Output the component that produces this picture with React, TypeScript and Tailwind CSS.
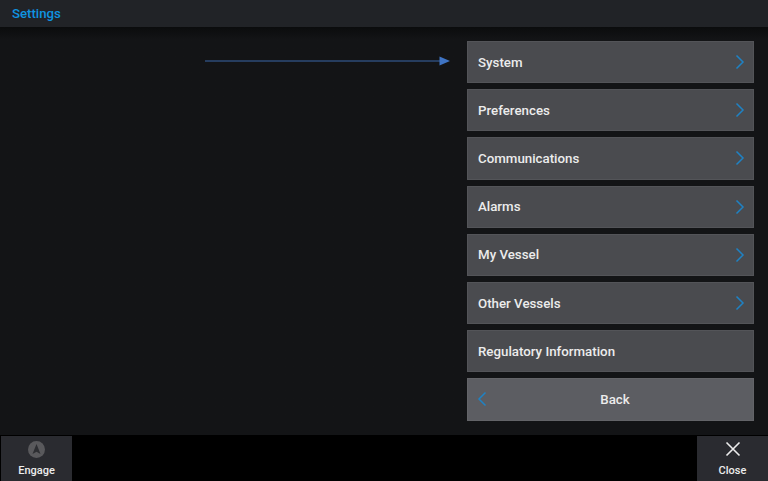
const items = ["System", "Preferences", "Communications", "Alarms", "My Vessel", "Other Vessels"];

const Chevron = ({ left = false }: { left?: boolean }) => (
    <svg width="10" height="16" viewBox="0 0 10 16" fill="none" className="shrink-0">
        <path
            d={left ? "M8.5 1.5 L2 8 L8.5 14.5" : "M1.5 1.5 L8 8 L1.5 14.5"}
            stroke="#1f82c4"
            strokeWidth="1.5"
        />
    </svg>
);

const App = () => {
    return (
        <div className="flex flex-col w-[768px] h-[481px] overflow-hidden bg-black font-['Roboto',sans-serif] text-[#ececec]">
            {/* Title bar */}
            <div className="flex items-center h-[27px] pl-3 bg-[#212327] text-[#0f93e0] text-[13.2px] font-medium shrink-0">
                Settings
            </div>

            {/* Menu */}
            <div className="relative flex justify-end h-[408px] pt-[14px] pr-[14px] bg-gradient-to-b from-[#0b0c0d] from-0% via-[#131416] via-[3%] to-[#131416]">
                <svg width="246" height="10" viewBox="0 0 246 10" className="absolute left-[205px] top-[29px]">
                    <path d="M0 5 H236" stroke="#3a66a8" strokeWidth="1" />
                    <path d="M234.5 0.5 L245 5 L234.5 9.5 Z" fill="#3f74c4" />
                </svg>
                <div className="flex flex-col gap-[6px] w-[287px]">
                    {items.map((item) => (
                        <div
                            key={item}
                            className="flex items-center justify-between h-[42.2px] pl-[10px] pr-[8px] bg-[#4a4b4f] border border-[#535458] text-[13.3px] font-medium"
                        >
                            <span className="pt-px">{item}</span>
                            <Chevron />
                        </div>
                    ))}
                    <div className="flex items-center h-[42.2px] pl-[10px] bg-[#4a4b4f] border border-[#535458] text-[13.3px] font-medium">
                        <span className="pt-px">Regulatory Information</span>
                    </div>
                    <div className="relative flex items-center justify-center h-[42.2px] pl-[9px] bg-[#5c5d62] border border-[#636468] text-[13.3px] font-medium">
                        <div className="absolute left-[9px] top-[12px]">
                            <Chevron left />
                        </div>
                        <span className="pt-px">Back</span>
                    </div>
                </div>
            </div>

            {/* Bottom bar */}
            <div className="flex justify-between flex-1 pt-px pl-px bg-black">
                <div className="flex flex-col items-center w-[71px] h-[45px] pt-[5px] bg-[#2a2b30] text-[11px] font-medium">
                    <svg width="17" height="17" viewBox="0 0 17 17" className="shrink-0">
                        <circle cx="8.5" cy="8.5" r="8.5" fill="#59595c" />
                        <path d="M8.5 3 L12.5 13 L8.5 10.8 L4.5 13 Z" fill="#2d2e32" />
                    </svg>
                    <span className="mt-[6px] leading-[13px]">Engage</span>
                </div>
                <div className="flex flex-col items-center w-[71px] h-[45px] pt-[5px] bg-[#2a2b30] text-[11px] font-medium">
                    <svg width="16" height="16" viewBox="0 0 16 16" fill="none" className="shrink-0">
                        <path d="M1.5 1.5 L14.5 14.5 M14.5 1.5 L1.5 14.5" stroke="#ececec" strokeWidth="1.6" />
                    </svg>
                    <span className="mt-[7px] leading-[13px]">Close</span>
                </div>
            </div>
        </div>
    );
};

export default App;
